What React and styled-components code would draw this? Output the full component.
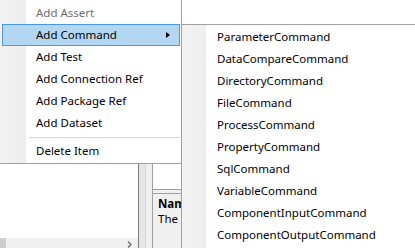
import React from 'react';
import styled, { createGlobalStyle } from 'styled-components';

const GlobalStyle = createGlobalStyle`
    html, body {
        margin: 0;
        padding: 0;
        background: #fff;
    }
    body {
        font-family: "Noto Sans", "Open Sans", sans-serif;
        font-size: 11.5px;
    }
`

const Screen = styled.div`
    position: relative;
    width: 415px;
    height: 248px;
    overflow: hidden;
    display: flex;
    background: #fff;
`

const TreePane = styled.div`
    width: 138px;
    border-right: 1px solid #7a7a7a;
    display: flex;
    flex-direction: column;
`

const TreeBody = styled.div`
    flex: 1;
    background: #fff;
`

const HScroll = styled.div`
    position: relative;
    height: 10px;
    background: #f0f0f0;
    display: flex;
    align-items: flex-start;
    justify-content: space-between;
`

const Thumb = styled.div`
    width: 6px;
    height: 100%;
    background: #cdcdcd;
`

const ScrollArrow = styled.svg`
    margin: 3px 6px 0 0;
`

const Splitter = styled.div`
    width: 14px;
    display: flex;
`

const SplitStrip = styled.div`
    width: ${p => p.$w}px;
    background: ${p => p.$bg};
    border-right: 1px solid ${p => p.$line};
`

const PropertyPane = styled.div`
    flex: 0 0 28px;
    overflow: hidden;
    display: flex;
    flex-direction: column;
    background: #f0f0f0;
`

const GridArea = styled.div`
    height: 189px;
    background: #fff;
    border-bottom: 1px solid #a0a0a0;
`

const DescPanel = styled.div`
    flex: 1;
    margin-top: 3px;
    border-top: 1px solid #a0a0a0;
    padding: 2px 5px;
    line-height: 15px;
    color: #000;
    white-space: nowrap;
`

const DescTitle = styled.div`
    font-weight: 700;
`

const Menu = styled.div`
    position: absolute;
    left: ${p => p.$left}px;
    top: ${p => p.$top}px;
    width: ${p => p.$width}px;
    box-sizing: border-box;
    border: 1px solid #a0a0a0;
    padding: ${p => p.$pad};
    background: linear-gradient(to right, #f2f2f2 0, #eeeeee ${p => p.$gutter - 1}px, #fff ${p => p.$gutter - 1}px);
`

const Item = styled.div`
    position: relative;
    box-sizing: border-box;
    height: 22px;
    line-height: 20px;
    padding-left: 33px;
    border: 1px solid ${p => p.$active ? '#4a98e2' : 'transparent'};
    background: ${p => p.$active ? '#b3d7f3' : 'transparent'};
    color: ${p => p.$disabled ? '#6d6d6d' : '#000'};
    white-space: nowrap;
`

const SubArrow = styled.span`
    position: absolute;
    right: 9px;
    top: 7px;
    width: 0;
    height: 0;
    border-left: 4px solid #000;
    border-top: 3px solid transparent;
    border-bottom: 3px solid transparent;
`

const Separator = styled.div`
    height: 6px;
    display: flex;
    align-items: center;
    padding-left: 27px;

    &::after {
        content: "";
        flex: 1;
        height: 1px;
        background: #d7d7d7;
    }
`

const mainItems = [
    { label: 'Add Assert', disabled: true },
    { label: 'Add Command', active: true, sub: true },
    { label: 'Add Test' },
    { label: 'Add Connection Ref' },
    { label: 'Add Package Ref' },
    { label: 'Add Dataset' },
    { separator: true },
    { label: 'Delete Item' },
]

const commands = [
    'ParameterCommand',
    'DataCompareCommand',
    'DirectoryCommand',
    'FileCommand',
    'ProcessCommand',
    'PropertyCommand',
    'SqlCommand',
    'VariableCommand',
    'ComponentInputCommand',
    'ComponentOutputCommand',
]

export default function App() {
    return (
        <>
            <GlobalStyle />
            <Screen>
                <TreePane>
                    <TreeBody />
                    <HScroll>
                        <Thumb />
                        <ScrollArrow width="5" height="7" viewBox="0 0 5 7">
                            <path d="M1 0.5 L4 3.5 L1 6.5" fill="none" stroke="#606060" strokeWidth="1.2" />
                        </ScrollArrow>
                    </HScroll>
                </TreePane>
                <Splitter>
                    <SplitStrip $w={7} $bg="#e6e6e6" $line="#d6d6d6" />
                    <SplitStrip $w={6} $bg="#f0f0f0" $line="#a0a0a0" />
                </Splitter>
                <PropertyPane>
                    <GridArea />
                    <DescPanel>
                        <DescTitle>Name</DescTitle>
                        <div>The name</div>
                    </DescPanel>
                </PropertyPane>

                <Menu $left={-1} $top={-1} $width={183} $gutter={27} $pad="2px 1px 1px 2px">
                    {mainItems.map((it, i) => it.separator
                        ? <Separator key={i} />
                        : (
                            <Item key={i} $active={it.active} $disabled={it.disabled}>
                                {it.label}
                                {it.sub && <SubArrow />}
                            </Item>
                        ))}
                </Menu>

                <Menu $left={181} $top={24} $width={260} $gutter={25} $pad="1px 1px 2px 1px">
                    {commands.map(c => <Item key={c}>{c}</Item>)}
                </Menu>
            </Screen>
        </>
    )
}
